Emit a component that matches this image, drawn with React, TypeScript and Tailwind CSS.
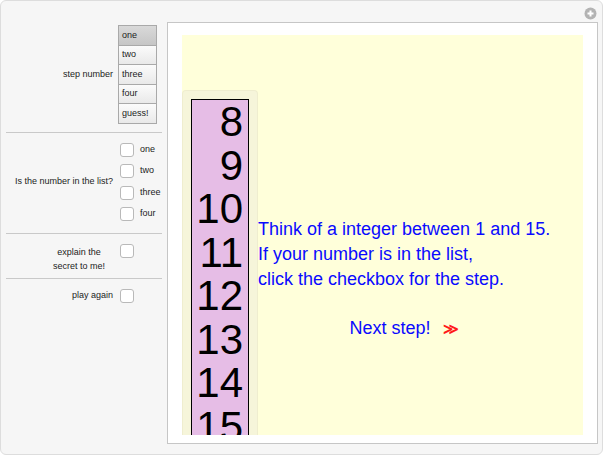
import React from "react";

const steps = ["one", "two", "three", "four", "guess!"];
const listChecks = ["one", "two", "three", "four"];
const numbers = [8, 9, 10, 11, 12, 13, 14, 15];

function Box() {
  return (
    <span className="block w-[14px] h-[14px] rounded-[3px] border border-[#b9b9b9] bg-white shrink-0" />
  );
}

function Sep() {
  return <div className="mx-[5px] h-px bg-[#c9c9c9]" />;
}

export default function App() {
  return (
    <div className="w-[604px] h-[456px] bg-white font-['Liberation_Sans',Arial,sans-serif]">
      <div className="relative flex w-[603px] h-[455px] rounded-[6px] border border-[#dddddd] bg-[#f6f6f6]">
        {/* controls */}
        <div className="w-[166px] shrink-0 text-[9px] text-[#1c1c1c]">
          <div className="flex items-center pt-[24px]">
            <div className="w-[112px] text-right">step number</div>
            <div className="ml-[5px] flex flex-col w-[39px] border-x border-b border-[#a9a9a9]">
              {steps.map((s, i) => (
                <div
                  key={s}
                  className={
                    "h-[19.6px] flex items-center pl-[3px] border-t border-[#a9a9a9] " +
                    (i === 0
                      ? "bg-gradient-to-b from-[#d9d9d9] to-[#c6c6c6]"
                      : "bg-gradient-to-b from-[#fbfbfb] to-[#e9e9e9]")
                  }
                >
                  {s}
                </div>
              ))}
            </div>
          </div>

          <div className="mt-[8px]">
            <Sep />
          </div>

          <div className="flex items-center pt-[6px]">
            <div className="w-[112px] text-right">Is the number in the list?</div>
            <div className="ml-[7px] flex flex-col">
              {listChecks.map((c) => (
                <div key={c} className="h-[21.5px] flex items-center gap-[6px]">
                  <Box />
                  <span>{c}</span>
                </div>
              ))}
            </div>
          </div>

          <div className="mt-[8px]">
            <Sep />
          </div>

          <div className="flex items-start pt-[10px]">
            <div className="w-[112px] flex justify-end pr-[8px]">
              <div className="text-center leading-[14px] mt-[1px]">
                explain the
                <br />
                secret to me!
              </div>
            </div>
            <div className="ml-[7px]">
              <Box />
            </div>
          </div>

          <div className="mt-[5px]">
            <Sep />
          </div>

          <div className="flex items-center pt-[10px]">
            <div className="w-[112px] text-right">play again</div>
            <div className="ml-[7px]">
              <Box />
            </div>
          </div>
        </div>

        {/* output */}
        <div className="pt-[21px]">
          <div className="w-[431px] h-[422px] border border-[#c6c6c6] bg-white pl-[14px] pt-[12px]">
            <div className="w-[401px] h-[400px] bg-[#ffffda] overflow-hidden flex items-start">
              <div className="mt-[55px] w-[76px] shrink-0 rounded-t-[4px] bg-[#f6f5da] border border-[#efedcf] border-b-0 px-[8px] pt-[8px]">
                <div className="border border-black bg-[#e6bde6] pr-[5px] text-right text-[42px] leading-[43.5px] text-black h-[380px]">
                  {numbers.map((n) => (
                    <div key={n}>{n}</div>
                  ))}
                </div>
              </div>
              <div className="mt-[182px] text-[18px] leading-[25px] text-[#0a0aff]">
                <div>Think of a integer between 1 and 15.</div>
                <div>If your number is in the list,</div>
                <div>click the checkbox for the step.</div>
                <div className="mt-[24px] text-center">
                  Next step!
                  <span className="ml-[12px] text-[#ff1a1a] text-[15px] font-bold">≫</span>
                </div>
              </div>
            </div>
          </div>
        </div>

        <svg className="absolute top-[6px] right-[5px]" width="13" height="13" viewBox="0 0 13 13">
          <circle cx="6.5" cy="6.5" r="6" fill="#b3b3b3" />
          <path d="M6.5 3.5v6M3.5 6.5h6" stroke="#fff" strokeWidth="2" />
        </svg>
      </div>
    </div>
  );
}
